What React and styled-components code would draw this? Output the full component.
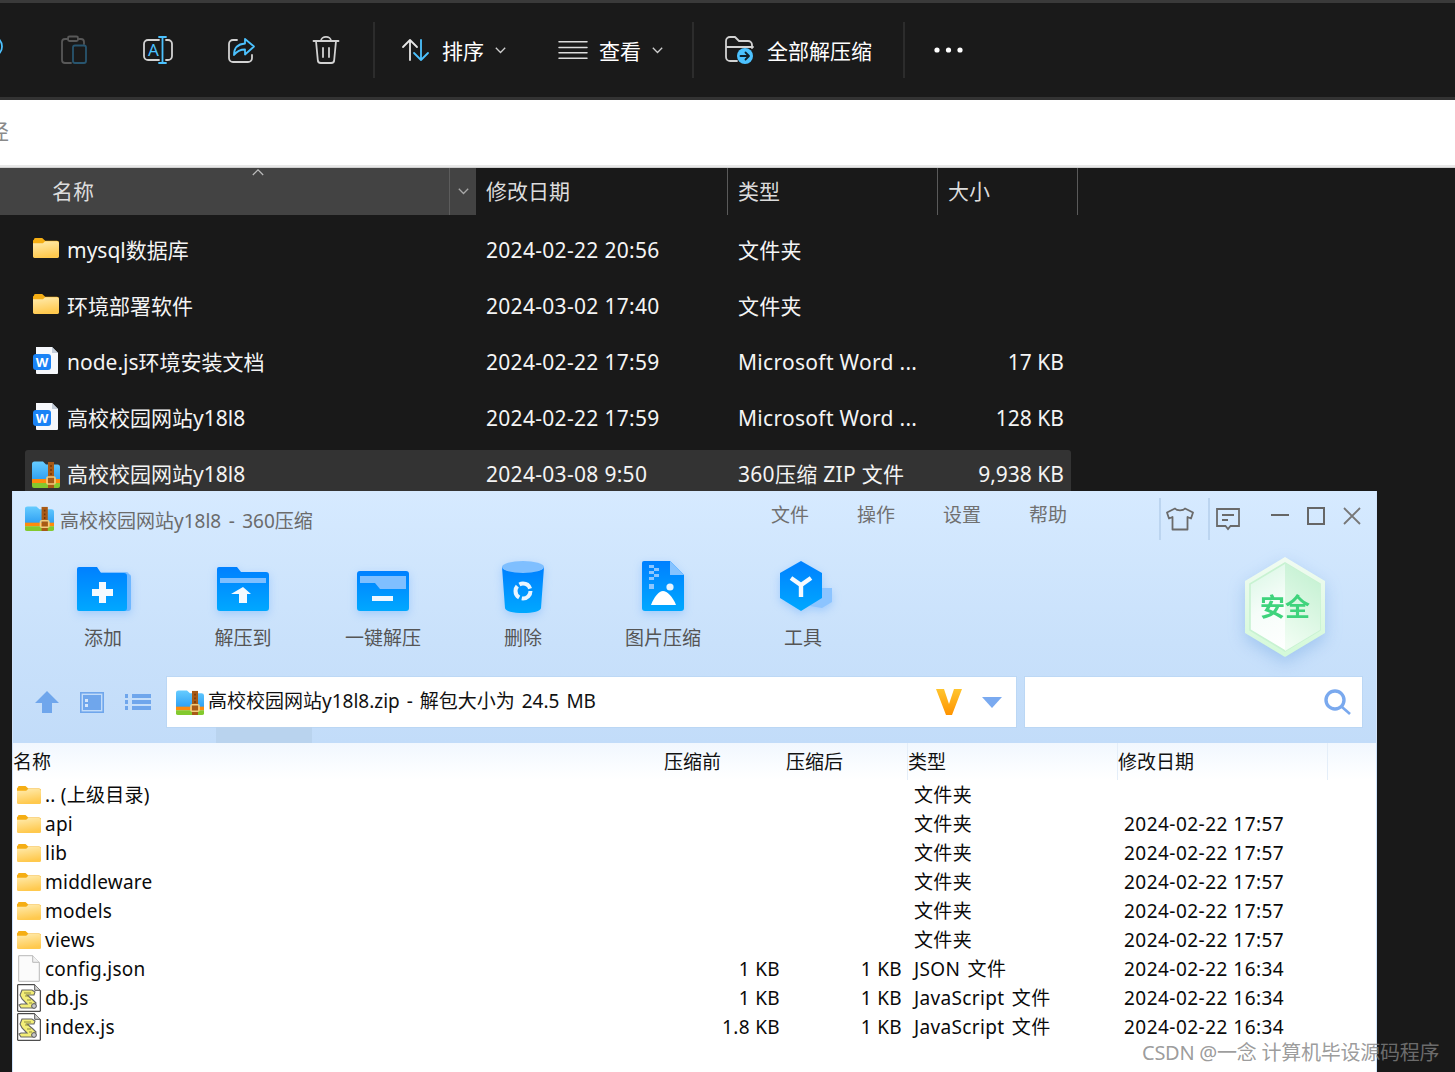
import React from 'react';
import styled, { createGlobalStyle } from 'styled-components';

const FONT = `"Noto Sans", "Noto Sans CJK SC", sans-serif`;

const Global = createGlobalStyle`
  html, body { margin: 0; padding: 0; background: #191919; }
  body { font-family: ${FONT}; overflow: hidden; }
  #root { width: 1455px; height: 1072px; }
`;

const Page = styled.div`
  position: relative;
  width: 1455px;
  height: 1072px;
  overflow: hidden;
  background: #191919;
  color: #fff;
`;

/* ---------- Explorer window ---------- */
const Explorer = styled.div`
  display: flex;
  flex-direction: column;
  border-top: 3px solid #3a3a3a;
`;
const Toolbar = styled.div`
  display: flex;
  align-items: center;
  height: 94px;
  background: #1a1a1a;
  margin-left: -52px;
`;
const IconBtn = styled.div`
  flex: 0 0 84px;
  display: flex;
  justify-content: center;
  align-items: center;
`;
const Sep = styled.div`
  flex: 0 0 2px;
  height: 56px;
  background: #2c2c2c;
  margin-left: ${p => p.$ml}px;
`;
const CmdBtn = styled.div`
  display: flex;
  align-items: center;
  gap: 12px;
  margin-left: ${p => p.$ml}px;
  font-size: 21px;
  line-height: 30px;
  color: #fff;
`;
const CmdLabel = styled.span`
  padding-top: 2px;
  margin-left: -1px;
`;
const Chevron = styled.svg`
  margin-left: -1px;
`;
const AddressBar = styled.div`
  height: 65px;
  box-sizing: content-box;
  background: #fff;
  border-top: 3px solid #333;
  display: flex;
  align-items: center;
  overflow: hidden;
  font-size: 21px;
  line-height: 28px;
  color: #8a8a8a;
`;
const AddressHint = styled.span`
  margin: -3px 0 0 -12px;
`;
const AddressEdge = styled.div`
  height: 3px;
  background: #e8e8e8;
  border-bottom: 1px solid #cfcfcf;
  box-sizing: border-box;
`;
const HeadRow = styled.div`
  display: grid;
  grid-template-columns: 476px 252px 210px 140px;
  height: 47px;
  font-size: 21px;
  line-height: 28px;
  color: #dcdcdc;
`;
const NameHead = styled.div`
  position: relative;
  display: flex;
  align-items: center;
  padding: 0 0 2px 52px;
  background: #434343;
`;
const SortCaret = styled.svg`
  position: absolute;
  left: 252px;
  top: 1px;
`;
const FilterCell = styled.div`
  position: absolute;
  left: 449px;
  top: 0;
  bottom: 0;
  width: 27px;
  border-left: 1px solid #5c5c5c;
  display: flex;
  align-items: center;
  justify-content: center;
`;
const HeadCell = styled.div`
  display: flex;
  align-items: center;
  padding: 0 0 2px 10px;
  border-right: 1px solid #5a5a5a;
`;
const FileList = styled.div`
  display: flex;
  flex-direction: column;
  gap: 8px;
  padding: 11px 0 0 25px;
`;
const FileRow = styled.div`
  display: grid;
  grid-template-columns: 451px 252px 200px 136px;
  align-items: center;
  width: 1046px;
  height: 48px;
  font-size: 21px;
  line-height: 28px;
  color: #f4f4f4;
  background: ${p => (p.$selected ? '#333333' : 'transparent')};
  border-radius: 3px;
`;
const FileName = styled.div`
  display: flex;
  align-items: center;
  gap: 8px;
  padding-left: 8px;
  white-space: nowrap;
`;
const FileIconBox = styled.span`
  flex: 0 0 26px;
  min-width: 0;
  display: flex;
  justify-content: center;
  padding-bottom: ${p => p.$up || 0}px;
  svg { flex-shrink: 0; }
`;
const FileCell = styled.div`
  padding-left: 10px;
  letter-spacing: 0.3px;
  white-space: nowrap;
`;
const FileSize = styled.div`
  text-align: right;
  white-space: nowrap;
`;

/* ---------- 360 Zip window ---------- */
const ZipWindow = styled.div`
  position: absolute;
  left: 12px;
  top: 491px;
  width: 1365px;
  height: 581px;
  box-sizing: border-box;
  display: flex;
  flex-direction: column;
  border-left: 1px solid #cfe3fb;
  border-right: 1px solid #cfe3fb;
  background: #fff;
  color: #000;
`;
const ZipChrome = styled.div`
  background: linear-gradient(180deg, #d6eaff 0%, #c9e1fb 60%, #c2dcf9 100%);
`;
const TitleBar = styled.div`
  display: flex;
  align-items: flex-start;
  height: 55px;
  padding-left: 12px;
`;
const TitleIcon = styled.span`
  display: flex;
  margin-top: 15px;
  flex: 0 0 29px;
`;
const TitleText = styled.div`
  flex: 0 0 696px;
  margin: 17px 0 0 6px;
  font-size: 19px;
  word-spacing: 2.5px;
  line-height: 26px;
  color: #6b6b6b;
`;
const MenuBar = styled.div`
  display: flex;
  gap: 48px;
  margin: 12px 0 0 15px;
  font-size: 19px;
  line-height: 24px;
  color: #707070;
`;
const ChromeSep = styled.div`
  flex: 0 0 2px;
  height: 42px;
  margin: 7px 0 0 ${p => p.$ml}px;
  background: #bcd5f0;
`;
const ChromeBtn = styled.div`
  display: flex;
  margin: ${p => p.$mt}px 0 0 ${p => p.$ml}px;
`;
const ToolRow = styled.div`
  display: flex;
  height: 131px;
  padding-left: 20px;
`;
const Tool = styled.div`
  flex: 0 0 140px;
  display: flex;
  flex-direction: column;
  align-items: center;
  padding-top: 12px;
`;
const ToolIcon = styled.div`
  height: ${p => 53 + (p.$drop || 0)}px;
  margin-bottom: ${p => -(p.$drop || 0)}px;
  display: flex;
  align-items: flex-end;
  justify-content: center;
`;
const ToolLabel = styled.div`
  margin-top: 14px;
  font-size: 19px;
  line-height: 26px;
  color: #555;
`;
const Shield = styled.div`
  margin: 10px 49px 0 auto;
  display: flex;
  filter: drop-shadow(0 6px 8px rgba(90, 150, 220, 0.35));
`;
const PathRow = styled.div`
  display: flex;
  align-items: center;
  height: 50px;
`;
const NavIcon = styled.span`
  display: flex;
  margin-left: ${p => p.$ml}px;
`;
const PathInput = styled.div`
  flex: 0 0 849px;
  box-sizing: border-box;
  height: 50px;
  margin-left: 16px;
  display: flex;
  align-items: center;
  gap: 4px;
  padding-left: 9px;
  background: #fff;
  box-shadow: 0 0 0 1px rgba(180, 210, 240, 0.55);
  font-size: 19px;
  line-height: 24px;
  color: #111;
  white-space: nowrap;
`;
const PathText = styled.span`
  flex: 1;
  padding-bottom: 2px;
  word-spacing: 2px;
`;
const VBadge = styled.span`
  display: flex;
  margin-right: 16px;
`;
const DropTri = styled.span`
  display: flex;
  margin-right: 14px;
`;
const SearchInput = styled.div`
  flex: 0 0 337px;
  box-sizing: border-box;
  height: 50px;
  margin-left: 9px;
  display: flex;
  align-items: center;
  justify-content: flex-end;
  padding-right: 11px;
  background: #fff;
  box-shadow: 0 0 0 1px rgba(180, 210, 240, 0.55);
`;
const Strip = styled.div`
  height: 16px;
  display: flex;
`;
const StripPatch = styled.div`
  width: 96px;
  margin-left: 203px;
  background: #b9d3ee;
`;
const COLS = '651px 122px 122px 210px 210px 1fr';
const ColumnHead = styled.div`
  display: grid;
  grid-template-columns: ${COLS};
  height: 37px;
  background: linear-gradient(180deg, #f1f7fe 0%, #fbfdff 70%, #fff 100%);
  font-size: 19px;
  line-height: 38px;
  color: #111;
`;
const ColCell = styled.div`
  border-right: ${p => (p.$line ? '1px solid #e4eef9' : 'none')};
`;
const ZipList = styled.div`
  display: flex;
  flex-direction: column;
  background: #fff;
`;
const ZipRow = styled.div`
  display: grid;
  grid-template-columns: ${COLS};
  align-items: center;
  height: 29px;
  font-size: 19px;
  line-height: 26px;
  letter-spacing: 0.35px;
  color: #0a0a0a;
  white-space: nowrap;
`;
const ZipName = styled.div`
  display: flex;
  align-items: center;
  gap: 4px;
  padding-left: 4px;
  letter-spacing: 0.25px;
`;
const ZipIconBox = styled.span`
  flex: 0 0 24px;
  display: flex;
  justify-content: center;
`;
const ZipSize = styled.div`
  text-align: right;
  padding-right: 6px;
`;
const ZipType = styled.div`
  padding-left: 6px;
  word-spacing: 2px;
`;
const ZipDate = styled.div`
  padding-left: 6px;
  letter-spacing: 0.47px;
`;
const Watermark = styled.div`
  position: absolute;
  left: 1142px;
  top: 1039px;
  font-size: 20px;
  letter-spacing: -0.25px;
  line-height: 28px;
  color: rgba(130, 130, 130, 0.8);
  white-space: nowrap;
`;

/* ---------- Explorer toolbar icons ---------- */
const GRAY = '#d2d2d2';
const BLUE = '#4cc2ff';
const Strokes = ({ box, w, h, children }) => (
  <svg width={w} height={h} viewBox={box} fill="none" strokeWidth="1.8" strokeLinecap="round" strokeLinejoin="round">{children}</svg>
);
const CutIcon = () => (
  <Strokes box="-40 35 60 30" w={60} h={30}>
    <path d="M-6 38.5c5-1 8 3 8 8s-3 9-8 8" stroke={BLUE} />
  </Strokes>
);
const PasteIcon = () => (
  <Strokes box="60 35 28 30" w={28} h={30}>
    <path d="M68 39h-3a3 3 0 0 0-3 3v18a3 3 0 0 0 3 3h6M78 39h3a3 3 0 0 1 3 3v2" stroke="#585858" />
    <rect x="68" y="36.5" width="10" height="4.5" rx="1.5" stroke="#585858" />
    <rect x="73" y="45.5" width="13" height="17.5" rx="2" stroke="#28556f" />
  </Strokes>
);
const RenameIcon = () => (
  <Strokes box="143 35 30 30" w={30} h={30}>
    <path d="M159 40h-11a4 4 0 0 0-4 4v12a4 4 0 0 0 4 4h11M166 40h2a4 4 0 0 1 4 4v12a4 4 0 0 1-4 4h-2" stroke={GRAY} />
    <path d="M162.5 37v26M159 37h7M159 63h7" stroke={BLUE} />
    <text x="153.5" y="56" fontSize="17" textAnchor="middle" fill={BLUE} stroke="none" fontFamily="Noto Sans, sans-serif">A</text>
  </Strokes>
);
const ShareIcon = () => (
  <Strokes box="229 36 28 28" w={28} h={28}>
    <path d="M238 40h-4a4 4 0 0 0-4 4v14a4 4 0 0 0 4 4h15a4 4 0 0 0 4-4v-3" stroke={GRAY} />
    <path d="M246 39l9 7.5-9 8v-5c-5 0-8 1.5-11 5.5 0-7 4-11 11-11.5z" stroke={BLUE} />
  </Strokes>
);
const TrashIcon = () => (
  <Strokes box="312 35 28 30" w={28} h={30}>
    <path d="M313.5 41h25M321 41c0-5.5 10-5.5 10 0M316 41l1.8 19a3 3 0 0 0 3 3h10.4a3 3 0 0 0 3-3L336 41M323 48v9M329 48v9" stroke={GRAY} />
  </Strokes>
);
const SortIcon = () => (
  <Strokes box="400 37 30 26" w={30} h={26}>
    <path d="M409 60V40M402 47l7-7 7 7" stroke="#e6e6e6" />
    <path d="M420 40v20M413 53l7 7 7-7" stroke={BLUE} />
  </Strokes>
);
const ViewIcon = () => (
  <Strokes box="557 40 30 20" w={30} h={20}>
    <path d="M558 41.7h28M558 47.4h28M558 52.8h28M558 58.3h28" stroke="#dcdcdc" strokeWidth="1.5" />
  </Strokes>
);
const ExtractIcon = () => (
  <Strokes box="725 36 32 30" w={32} h={30}>
    <path d="M738 62h-7a4 4 0 0 1-4-4V42a4 4 0 0 1 4-4h5l4 4h9a4 4 0 0 1 4 4v3M728 48h26" stroke={GRAY} />
    <circle cx="746" cy="57" r="8" fill={BLUE} />
    <path d="M741.5 57h8M746.5 53.5l3.5 3.5-3.5 3.5" stroke="#10202a" />
  </Strokes>
);
const ChevronDown = ({ color = '#cfcfcf' }) => (
  <Chevron width="11" height="7" viewBox="0 0 11 7" fill="none">
    <path d="M.8.8l4.7 4.7L10.2.8" stroke={color} strokeWidth="1.3" />
  </Chevron>
);
const Dots = () => (
  <svg width="29" height="6" viewBox="0 0 29 6"><g fill="#fff"><circle cx="3" cy="3" r="2.6" /><circle cx="14.5" cy="3" r="2.6" /><circle cx="26" cy="3" r="2.6" /></g></svg>
);

/* ---------- File icons ---------- */
const Folder = ({ id, w = 26, h = 20 }) => (
  <svg width={w} height={h} viewBox="0 0 26 21" preserveAspectRatio="none">
    <defs><linearGradient id={id} x1="0" y1="0" x2="0.25" y2="1"><stop offset="0" stopColor="#ffecb0" /><stop offset="1" stopColor="#ffc94e" /></linearGradient></defs>
    <path d="M1 1.5A1.5 1.5 0 0 1 2.5 0h6.7l3 3H24a2 2 0 0 1 2 2v5H0V2.5z" fill="#f5ae14" />
    <path d="M0 5.5h10l2-2h12a2 2 0 0 1 2 2V19.5a1.5 1.5 0 0 1-1.5 1.5h-23A1.5 1.5 0 0 1 0 19.5z" fill={`url(#${id})`} />
  </svg>
);
const WordIcon = () => (
  <svg width="26" height="27" viewBox="0 0 26 27">
    <path d="M3 0h16l6 6v20a1 1 0 0 1-1 1H4a1 1 0 0 1-1-1z" fill="#f6f8fc" />
    <path d="M19 0l6 6h-6z" fill="#c4cdda" />
    <rect x="0" y="7" width="18" height="16" rx="3" fill="#1a83f6" />
    <text x="9" y="20" textAnchor="middle" fontSize="13" fontWeight="700" fill="#fff" fontFamily="Noto Sans, sans-serif">W</text>
  </svg>
);
const ZipIcon = ({ id, w = 28, h = 27 }) => (
  <svg width={w} height={h} viewBox="0 0 28 27" preserveAspectRatio="none">
    <defs><linearGradient id={id} x1="0" y1="0" x2="0" y2="1"><stop offset="0" stopColor="#66ccff" /><stop offset="1" stopColor="#2b9df2" /></linearGradient></defs>
    <path d="M0 3a2.5 2.5 0 0 1 2.5-2.5H11l3 3h11.5A2.5 2.5 0 0 1 28 6v14H0z" fill={`url(#${id})`} />
    <rect x="0" y="18" width="28" height="4" fill="#ff8a0c" />
    <path d="M0 22h28v3a2 2 0 0 1-2 2H2a2 2 0 0 1-2-2z" fill="#83c92e" />
    <rect x="16" y="1" width="6" height="26" fill="#a85a16" />
    <rect x="15" y="16" width="8" height="7" rx="1" fill="none" stroke="#f2cc7d" strokeWidth="1.6" />
    <path d="M19 4v2M19 8v2M19 12v2" stroke="#6f3606" strokeWidth="1.4" />
  </svg>
);
const BlankDoc = () => (
  <svg width="22" height="27" viewBox="0 0 22 27">
    <path d="M.7.7h14l6.6 6.6v19H.7z" fill="#fbfbfb" stroke="#b8b8b8" />
    <path d="M14.7.7v6.6h6.6" fill="#f1f1f1" stroke="#b8b8b8" />
  </svg>
);
const ScriptDoc = () => (
  <svg width="24" height="28" viewBox="0 0 24 28">
    <path d="M.7.7h17l5.6 5.6v21H.7z" fill="#fff" stroke="#222" />
    <path d="M17.7.7v5.6h5.6" fill="#d6d6d6" stroke="#555" />
    <path d="M5 6h10l3 2-1 3h-7l6 5 3 3-1 4-3 1H4l-2-3 2-1h6l-5-5-2-4z" fill="#f3ee78" stroke="#666" strokeWidth="1.1" />
    <path d="M7 9h7M8 12h4M10 16h4M12 19h3" stroke="#8f8f3a" strokeWidth="1" />
    <circle cx="17" cy="22" r="2.4" fill="#c9c9c9" stroke="#555" />
  </svg>
);

/* ---------- 360 toolbar icons ---------- */
const BlueGrad = ({ id }) => (
  <defs><linearGradient id={id} x1="0" y1="0" x2="0" y2="1"><stop offset="0" stopColor="#0080ff" /><stop offset="1" stopColor="#00a8ff" /></linearGradient></defs>
);
const glow = { filter: 'drop-shadow(0 3px 4px rgba(60,150,255,.3))' };
const AddIcon = () => (
  <svg width="56" height="44" viewBox="-2 0 56 44" style={glow}>
    <BlueGrad id="g-add" />
    <path d="M22 5h27a3 3 0 0 1 3 3v6H22z" fill="#7fbfff" />
    <path d="M47 7h4a3 3 0 0 1 3 3v31a3 3 0 0 1-3 3h-4z" fill="#6fb7ff" />
    <path d="M0 2a2 2 0 0 1 2-2h18l4 6h23a3 3 0 0 1 3 3v32a3 3 0 0 1-3 3H2a2 2 0 0 1-2-2z" fill="url(#g-add)" />
    <path d="M22 15h7v7h7v7h-7v7h-7v-7h-7v-7h7z" fill="#f4faff" />
  </svg>
);
const ExtractToIcon = () => (
  <svg width="52" height="44" viewBox="0 0 52 44" style={glow}>
    <BlueGrad id="g-ext" />
    <path d="M0 2a2 2 0 0 1 2-2h18l4 5h25a3 3 0 0 1 3 3v33a3 3 0 0 1-3 3H3a3 3 0 0 1-3-3z" fill="url(#g-ext)" />
    <path d="M3 11h46v5H3z" fill="#7fbfff" />
    <path d="M26 20l8 7h-4v9h-8v-9h-8z" fill="#f4faff" />
  </svg>
);
const OneKeyIcon = () => (
  <svg width="52" height="40" viewBox="0 0 52 40" style={glow}>
    <BlueGrad id="g-one" />
    <rect width="52" height="40" rx="3" fill="url(#g-one)" />
    <path d="M3 5h46v13H23l-5-6H3z" fill="#7fbfff" />
    <rect x="15" y="25" width="21" height="5" fill="#eef7ff" />
  </svg>
);
const BinIcon = () => (
  <svg width="42" height="52" viewBox="0 0 42 52" style={glow}>
    <BlueGrad id="g-bin" />
    <path d="M0 6l3 41c0 3 8 5 18 5s18-2 18-5l3-41z" fill="url(#g-bin)" />
    <ellipse cx="21" cy="6" rx="21" ry="6" fill="#7fbfff" />
    <circle cx="21" cy="30" r="7.5" fill="none" stroke="#eaf5ff" strokeWidth="4" strokeDasharray="13 2.7" />
  </svg>
);
const ImageZipIcon = () => (
  <svg width="42" height="50" viewBox="0 0 42 50" style={glow}>
    <BlueGrad id="g-img" />
    <path d="M2 0h26l14 14v33a3 3 0 0 1-3 3H3a3 3 0 0 1-3-3V2a2 2 0 0 1 2-2z" fill="url(#g-img)" />
    <path d="M28 0l14 14H28z" fill="#86c3ff" />
    <path d="M7 4h5v3H7zM12 7h5v3h-5zM7 10h5v3H7zM12 13h5v3h-5zM7 16h5v3H7zM7 23h5v5H7z" fill="#8cc6ff" />
    <circle cx="28" cy="26" r="3.6" fill="#e7f4ff" />
    <path d="M9 44c3-8 8-14 12-14s10 6 13 14z" fill="#fff" />
  </svg>
);
const CubeIcon = () => (
  <svg width="58" height="50" viewBox="-6 0 58 50" style={glow}>
    <BlueGrad id="g-cube" />
    <path d="M36 27l16 0 0 14-10 6-12-2z" fill="#8cc4ff" />
    <path d="M21 0l21 12v25L21 50 0 37V12z" fill="url(#g-cube)" />
    <path d="M11 17l10 7 10-7M21 24v12" fill="none" stroke="#f4faff" strokeWidth="4.4" />
  </svg>
);
const ShieldIcon = () => (
  <svg width="84" height="102" viewBox="0 0 84 102">
    <defs>
      <linearGradient id="g-sh1" x1="0" y1="0" x2="0.5" y2="1"><stop offset="0" stopColor="#d6f6e2" /><stop offset=".5" stopColor="#f6fdf9" /><stop offset="1" stopColor="#ffffff" /></linearGradient>
      <linearGradient id="g-sh2" x1="0.6" y1="0" x2="0.3" y2="1"><stop offset="0" stopColor="#c4f1d2" /><stop offset="1" stopColor="#f1fdf3" /></linearGradient>
      <linearGradient id="g-sh3" x1="0" y1="0" x2="0" y2="1"><stop offset="0" stopColor="#f1fbf2" /><stop offset="1" stopColor="#d3f9d8" /></linearGradient>
    </defs>
    <path d="M42 1l40 24v52L42 101 2 77V25z" fill="url(#g-sh3)" />
    <path d="M42 7L77 28v46L42 95 7 74V28z" fill="url(#g-sh1)" stroke="#c8f2d2" strokeWidth="1.6" />
    <path d="M42 7L77 28v46L42 95z" fill="url(#g-sh2)" />
    <text x="42" y="60" textAnchor="middle" fontSize="25" fontWeight="700" fill="#3fd37c" fontFamily='"Noto Sans CJK SC", sans-serif'>安全</text>
  </svg>
);
const Shirt = () => (
  <svg width="28" height="24" viewBox="0 0 28 24" fill="none" stroke="#6a6a6a" strokeWidth="1.8" strokeLinejoin="round">
    <path d="M9 1.5C11 4 17 4 19 1.5l8 4-2 6-3.5-1.5V22.5H6.5V10L3 11.5l-2-6z" />
  </svg>
);
const Chat = () => (
  <svg width="24" height="23" viewBox="0 0 24 23" fill="none" stroke="#6a6a6a" strokeWidth="1.8">
    <path d="M1 1h22v17H14.5L12 21l-2.5-3H1zM6 7h12M6 12h6" />
  </svg>
);
const MinI = () => <svg width="18" height="18" viewBox="0 0 18 18"><path d="M0 8h18" stroke="#666" strokeWidth="2" /></svg>;
const MaxI = () => <svg width="18" height="18" viewBox="0 0 18 18" fill="none"><rect x="1" y="1" width="16" height="16" stroke="#666" strokeWidth="2" /></svg>;
const CloseI = () => <svg width="18" height="18" viewBox="0 0 18 18"><path d="M1 1l16 16M17 1L1 17" stroke="#777" strokeWidth="1.8" /></svg>;
const UpArrow = () => <svg width="24" height="22" viewBox="0 0 24 22"><path d="M12 0l12 12h-7v10H7V12H0z" fill="#6fa6ec" /></svg>;
const PaneIcon = () => (
  <svg width="24" height="21" viewBox="0 0 24 21">
    <rect x=".8" y=".8" width="22.4" height="19.4" fill="#c2dcf9" stroke="#6fa6ec" strokeWidth="1.6" />
    <rect x="3" y="3" width="18" height="15" fill="#6fa6ec" />
    <path d="M5 7h3v3H5zM5 12h3v3H5z" fill="#d4e6fb" />
  </svg>
);
const ListIcon = () => (
  <svg width="26" height="18" viewBox="0 0 26 18" fill="#6fa6ec">
    <path d="M0 1h3v4H0zM7 1h19v4H7zM0 7h3v4H0zM7 7h19v4H7zM0 13h3v4H0zM7 13h19v4H7z" />
  </svg>
);
const VMark = () => (
  <svg width="26" height="26" viewBox="0 0 26 26">
    <defs><linearGradient id="g-v" x1="0" y1="0" x2="0" y2="1"><stop offset="0" stopColor="#ffc52e" /><stop offset="1" stopColor="#ff9300" /></linearGradient></defs>
    <path d="M0 0h8l5 15 5-15h8L16 26h-6z" fill="url(#g-v)" />
  </svg>
);
const Tri = () => <svg width="20" height="11" viewBox="0 0 20 11"><path d="M0 0h20L10 11z" fill="#7aaaf0" /></svg>;
const Magnifier = () => (
  <svg width="27" height="26" viewBox="0 0 27 26" fill="none" stroke="#7aa9ee">
    <circle cx="11" cy="11" r="9" strokeWidth="3.4" />
    <path d="M18 18l8 7" strokeWidth="2.6" />
  </svg>
);

/* ---------- Data ---------- */
const explorerRows = [
  { icon: 'folder', name: 'mysql数据库', date: '2024-02-22 20:56', type: '文件夹', size: '' },
  { icon: 'folder', name: '环境部署软件', date: '2024-03-02 17:40', type: '文件夹', size: '' },
  { icon: 'word', name: 'node.js环境安装文档', date: '2024-02-22 17:59', type: 'Microsoft Word ...', size: '17 KB' },
  { icon: 'word', name: '高校校园网站y18l8', date: '2024-02-22 17:59', type: 'Microsoft Word ...', size: '128 KB' },
  { icon: 'zip', name: '高校校园网站y18l8', date: '2024-03-08 9:50', type: '360压缩 ZIP 文件', size: '9,938 KB', selected: true },
];
const zipRows = [
  { icon: 'folder', name: '.. (上级目录)', before: '', after: '', type: '文件夹', date: '' },
  { icon: 'folder', name: 'api', before: '', after: '', type: '文件夹', date: '2024-02-22 17:57' },
  { icon: 'folder', name: 'lib', before: '', after: '', type: '文件夹', date: '2024-02-22 17:57' },
  { icon: 'folder', name: 'middleware', before: '', after: '', type: '文件夹', date: '2024-02-22 17:57' },
  { icon: 'folder', name: 'models', before: '', after: '', type: '文件夹', date: '2024-02-22 17:57' },
  { icon: 'folder', name: 'views', before: '', after: '', type: '文件夹', date: '2024-02-22 17:57' },
  { icon: 'doc', name: 'config.json', before: '1 KB', after: '1 KB', type: 'JSON 文件', date: '2024-02-22 16:34' },
  { icon: 'script', name: 'db.js', before: '1 KB', after: '1 KB', type: 'JavaScript 文件', date: '2024-02-22 16:34' },
  { icon: 'script', name: 'index.js', before: '1.8 KB', after: '1 KB', type: 'JavaScript 文件', date: '2024-02-22 16:34' },
];
const tools = [
  ['添加', <AddIcon />, 0], ['解压到', <ExtractToIcon />, 0], ['一键解压', <OneKeyIcon />, 0],
  ['删除', <BinIcon />, 2], ['图片压缩', <ImageZipIcon />, 0], ['工具', <CubeIcon />, 0],
];

const explorerIcon = (kind, i) => {
  if (kind === 'folder') return <FileIconBox $up={4}><Folder id={`ef${i}`} /></FileIconBox>;
  if (kind === 'word') return <FileIconBox $up={3}><WordIcon /></FileIconBox>;
  return <FileIconBox><ZipIcon id={`ez${i}`} /></FileIconBox>;
};
const zipIcon = (kind, i) => {
  if (kind === 'folder') return <Folder id={`zf${i}`} w={24} h={18} />;
  if (kind === 'doc') return <BlankDoc />;
  return <ScriptDoc />;
};

export default function App() {
  return (
    <Page>
      <Global />
      <Explorer>
        <Toolbar>
          <IconBtn><CutIcon /></IconBtn>
          <IconBtn><PasteIcon /></IconBtn>
          <IconBtn><RenameIcon /></IconBtn>
          <IconBtn><ShareIcon /></IconBtn>
          <IconBtn><TrashIcon /></IconBtn>
          <Sep $ml={5} />
          <CmdBtn $ml={26}><SortIcon /><CmdLabel>排序</CmdLabel><ChevronDown /></CmdBtn>
          <CmdBtn $ml={52}><ViewIcon /><CmdLabel>查看</CmdLabel><ChevronDown /></CmdBtn>
          <Sep $ml={29} />
          <CmdBtn $ml={30}><ExtractIcon /><CmdLabel>全部解压缩</CmdLabel></CmdBtn>
          <Sep $ml={31} />
          <CmdBtn $ml={29}><Dots /></CmdBtn>
        </Toolbar>
        <AddressBar><AddressHint>径</AddressHint></AddressBar>
        <AddressEdge />
        <HeadRow>
          <NameHead>
            名称
            <SortCaret width="12" height="7" viewBox="0 0 12 7" fill="none"><path d="M.8 6L6 .8 11.2 6" stroke="#bbb" strokeWidth="1.2" /></SortCaret>
            <FilterCell><ChevronDown color="#a8a8a8" /></FilterCell>
          </NameHead>
          <HeadCell>修改日期</HeadCell>
          <HeadCell>类型</HeadCell>
          <HeadCell>大小</HeadCell>
        </HeadRow>
        <FileList>
          {explorerRows.map((r, i) => (
            <FileRow key={i} $selected={r.selected}>
              <FileName>{explorerIcon(r.icon, i)}{r.name}</FileName>
              <FileCell>{r.date}</FileCell>
              <FileCell>{r.type}</FileCell>
              <FileSize>{r.size}</FileSize>
            </FileRow>
          ))}
        </FileList>
      </Explorer>

      <ZipWindow>
        <ZipChrome>
          <TitleBar>
            <TitleIcon><ZipIcon id="zt" w={29} h={25} /></TitleIcon>
            <TitleText>高校校园网站y18l8 - 360压缩</TitleText>
            <MenuBar><span>文件</span><span>操作</span><span>设置</span><span>帮助</span></MenuBar>
            <ChromeSep $ml={92} />
            <ChromeBtn $ml={5} $mt={16}><Shirt /></ChromeBtn>
            <ChromeSep $ml={14} />
            <ChromeBtn $ml={6} $mt={17}><Chat /></ChromeBtn>
            <ChromeBtn $ml={31} $mt={16}><MinI /></ChromeBtn>
            <ChromeBtn $ml={18} $mt={16}><MaxI /></ChromeBtn>
            <ChromeBtn $ml={18} $mt={16}><CloseI /></ChromeBtn>
          </TitleBar>
          <ToolRow>
            {tools.map(([label, icon, drop]) => (
              <Tool key={label}><ToolIcon $drop={drop}>{icon}</ToolIcon><ToolLabel>{label}</ToolLabel></Tool>
            ))}
            <Shield><ShieldIcon /></Shield>
          </ToolRow>
          <PathRow>
            <NavIcon $ml={22}><UpArrow /></NavIcon>
            <NavIcon $ml={21}><PaneIcon /></NavIcon>
            <NavIcon $ml={21}><ListIcon /></NavIcon>
            <PathInput>
              <ZipIcon id="zp" w={28} h={25} />
              <PathText>高校校园网站y18l8.zip - 解包大小为 24.5 MB</PathText>
              <VBadge><VMark /></VBadge>
              <DropTri><Tri /></DropTri>
            </PathInput>
            <SearchInput><Magnifier /></SearchInput>
          </PathRow>
          <Strip><StripPatch /></Strip>
        </ZipChrome>
        <ColumnHead>
          <ColCell>名称</ColCell>
          <ColCell>压缩前</ColCell>
          <ColCell $line>压缩后</ColCell>
          <ColCell $line>类型</ColCell>
          <ColCell $line>修改日期</ColCell>
          <ColCell />
        </ColumnHead>
        <ZipList>
          {zipRows.map((r, i) => (
            <ZipRow key={i}>
              <ZipName><ZipIconBox>{zipIcon(r.icon, i)}</ZipIconBox>{r.name}</ZipName>
              <ZipSize>{r.before}</ZipSize>
              <ZipSize>{r.after}</ZipSize>
              <ZipType>{r.type}</ZipType>
              <ZipDate>{r.date}</ZipDate>
              <div />
            </ZipRow>
          ))}
        </ZipList>
      </ZipWindow>
      <Watermark>CSDN @一念 计算机毕设源码程序</Watermark>
    </Page>
  );
}
